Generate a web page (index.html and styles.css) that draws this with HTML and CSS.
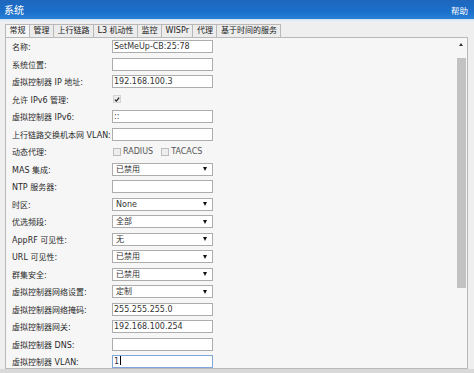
FILE: index.html
```html
<!DOCTYPE html>
<html lang="zh">
<head>
<meta charset="utf-8">
<link rel="stylesheet" href="styles.css">
</head>
<body>
<div class="page">
  <div class="header">
    <span class="title">系统</span>
    <span class="help">帮助</span>
  </div>
  <div class="strip"></div>
  <div class="tabs">
    <span class="tab active">常规</span>
    <span class="tab">管理</span>
    <span class="tab">上行链路</span>
    <span class="tab">L3 机动性</span>
    <span class="tab">监控</span>
    <span class="tab">WISPr</span>
    <span class="tab">代理</span>
    <span class="tab">基于时间的服务</span>
  </div>
  <div class="panel">
    <div class="form">
      <div class="label">名称:</div><div class="field"><span class="box">SetMeUp-CB:25:78</span></div>
      <div class="label">系统位置:</div><div class="field"><span class="box"></span></div>
      <div class="label">虚拟控制器 IP 地址:</div><div class="field"><span class="box">192.168.100.3</span></div>
      <div class="label">允许 IPv6 管理:</div><div class="field"><span class="check checked"><svg width="7" height="7" viewBox="0 0 7 7"><path d="M1 3.6 L2.8 5.4 L6 1.4" fill="none" stroke="#222" stroke-width="1.5"/></svg></span></div>
      <div class="label">虚拟控制器 IPv6:</div><div class="field"><span class="box">::</span></div>
      <div class="label">上行链路交换机本网 VLAN:</div><div class="field"><span class="box"></span></div>
      <div class="label">动态代理:</div><div class="field"><span class="check"></span><span class="opt">RADIUS</span><span class="check"></span><span class="opt">TACACS</span></div>
      <div class="label">MAS 集成:</div><div class="field"><span class="box sel">已禁用<i class="arrow"></i></span></div>
      <div class="label">NTP 服务器:</div><div class="field"><span class="box"></span></div>
      <div class="label">时区:</div><div class="field"><span class="box sel">None<i class="arrow"></i></span></div>
      <div class="label">优选频段:</div><div class="field"><span class="box sel">全部<i class="arrow"></i></span></div>
      <div class="label">AppRF 可见性:</div><div class="field"><span class="box sel">无<i class="arrow"></i></span></div>
      <div class="label">URL 可见性:</div><div class="field"><span class="box sel">已禁用<i class="arrow"></i></span></div>
      <div class="label">群集安全:</div><div class="field"><span class="box sel">已禁用<i class="arrow"></i></span></div>
      <div class="label">虚拟控制器网络设置:</div><div class="field"><span class="box sel">定制<i class="arrow"></i></span></div>
      <div class="label">虚拟控制器网络掩码:</div><div class="field"><span class="box">255.255.255.0</span></div>
      <div class="label">虚拟控制器网关:</div><div class="field"><span class="box">192.168.100.254</span></div>
      <div class="label">虚拟控制器 DNS:</div><div class="field"><span class="box"></span></div>
      <div class="label">虚拟控制器 VLAN:</div><div class="field"><span class="box focus">1<i class="caret"></i></span></div>
    </div>
    <div class="scrollbar">
      <div class="up"></div>
      <div class="thumb"></div>
    </div>
  </div>
  <div class="footer"></div>
</div>
</body>
</html>
```
FILE: styles.css
```css
html, body {
  margin: 0;
  padding: 0;
}
body {
  width: 474px;
  height: 373px;
  overflow: hidden;
  background: #efefef;
  font-family: "DejaVu Sans", "Noto Sans CJK SC", sans-serif;
  font-size: 8px;
  color: #2a2a2a;
}
.page {
  display: flex;
  flex-direction: column;
  height: 373px;
}
.header {
  height: 19px;
  background: linear-gradient(#1f67bd, #1a6fca 60%, #2a7fd6);
  display: flex;
  justify-content: space-between;
  align-items: center;
  padding: 0 6px 0 4px;
  color: #fff;
}
.title {
  font-size: 10px;
}
.help {
  font-size: 8.5px;
}
.strip {
  height: 3px;
  background: linear-gradient(#cfe0f2, #f3f3f3);
}
.tabs {
  display: flex;
  margin: 2px 0 0 5px;
  height: 13px;
}
.tab {
  border: 1px solid #b9b9b9;
  border-left: none;
  border-bottom: none;
  padding: 0 3.5px;
  line-height: 12px;
  background: #ececec;
  color: #222;
  white-space: nowrap;
}
.tab:first-child {
  border-left: 1px solid #b9b9b9;
}
.tab.active {
  background: #f6f6f6;
}
.panel {
  margin-left: 5px;
  width: 461px;
  height: 330px;
  border: 1px solid #b9b9b9;
  background: #f6f6f6;
  display: flex;
}
.form {
  flex: 1;
  display: grid;
  grid-template-columns: 100px 1fr;
  grid-auto-rows: 17.5px;
  align-content: start;
  padding-left: 6px;
}
.label {
  display: flex;
  align-items: center;
  white-space: nowrap;
  color: #2a2a2a;
}
.field {
  display: flex;
  align-items: center;
}
.box {
  position: relative;
  box-sizing: border-box;
  width: 101px;
  height: 13px;
  border: 1px solid #adadad;
  background: #fff;
  padding-left: 1px;
  line-height: 11px;
  color: #333;
  white-space: nowrap;
}
.box.sel {
  padding-left: 3px;
}
.box.focus {
  border-color: #7fa6d8;
}
.arrow {
  position: absolute;
  right: 5px;
  top: 3.5px;
  width: 0;
  height: 0;
  border-left: 2.5px solid transparent;
  border-right: 2.5px solid transparent;
  border-top: 4px solid #111;
}
.caret {
  display: inline-block;
  width: 1px;
  height: 9px;
  background: #000;
  vertical-align: -1px;
  margin-left: 1px;
}
.check {
  box-sizing: border-box;
  width: 8px;
  height: 8px;
  margin-left: 1px;
  border: 1px solid #bdbdbd;
  background: #ededed;
  display: inline-flex;
  align-items: center;
  justify-content: center;
}
.check.checked {
  border-color: #d4d4d4;
}
.opt {
  margin: 0 7px 0 2px;
  color: #555;
  font-size: 8px;
}
.scrollbar {
  width: 12px;
  display: flex;
  flex-direction: column;
  align-items: center;
}
.up {
  margin-top: 5px;
  width: 0;
  height: 0;
  border-left: 2.5px solid transparent;
  border-right: 2.5px solid transparent;
  border-bottom: 3px solid #333;
}
.thumb {
  margin-top: 12px;
  width: 9px;
  height: 230px;
  background: #c2c2c2;
}
.footer {
  flex: 1;
  background: #d9d9d9;
}
```
